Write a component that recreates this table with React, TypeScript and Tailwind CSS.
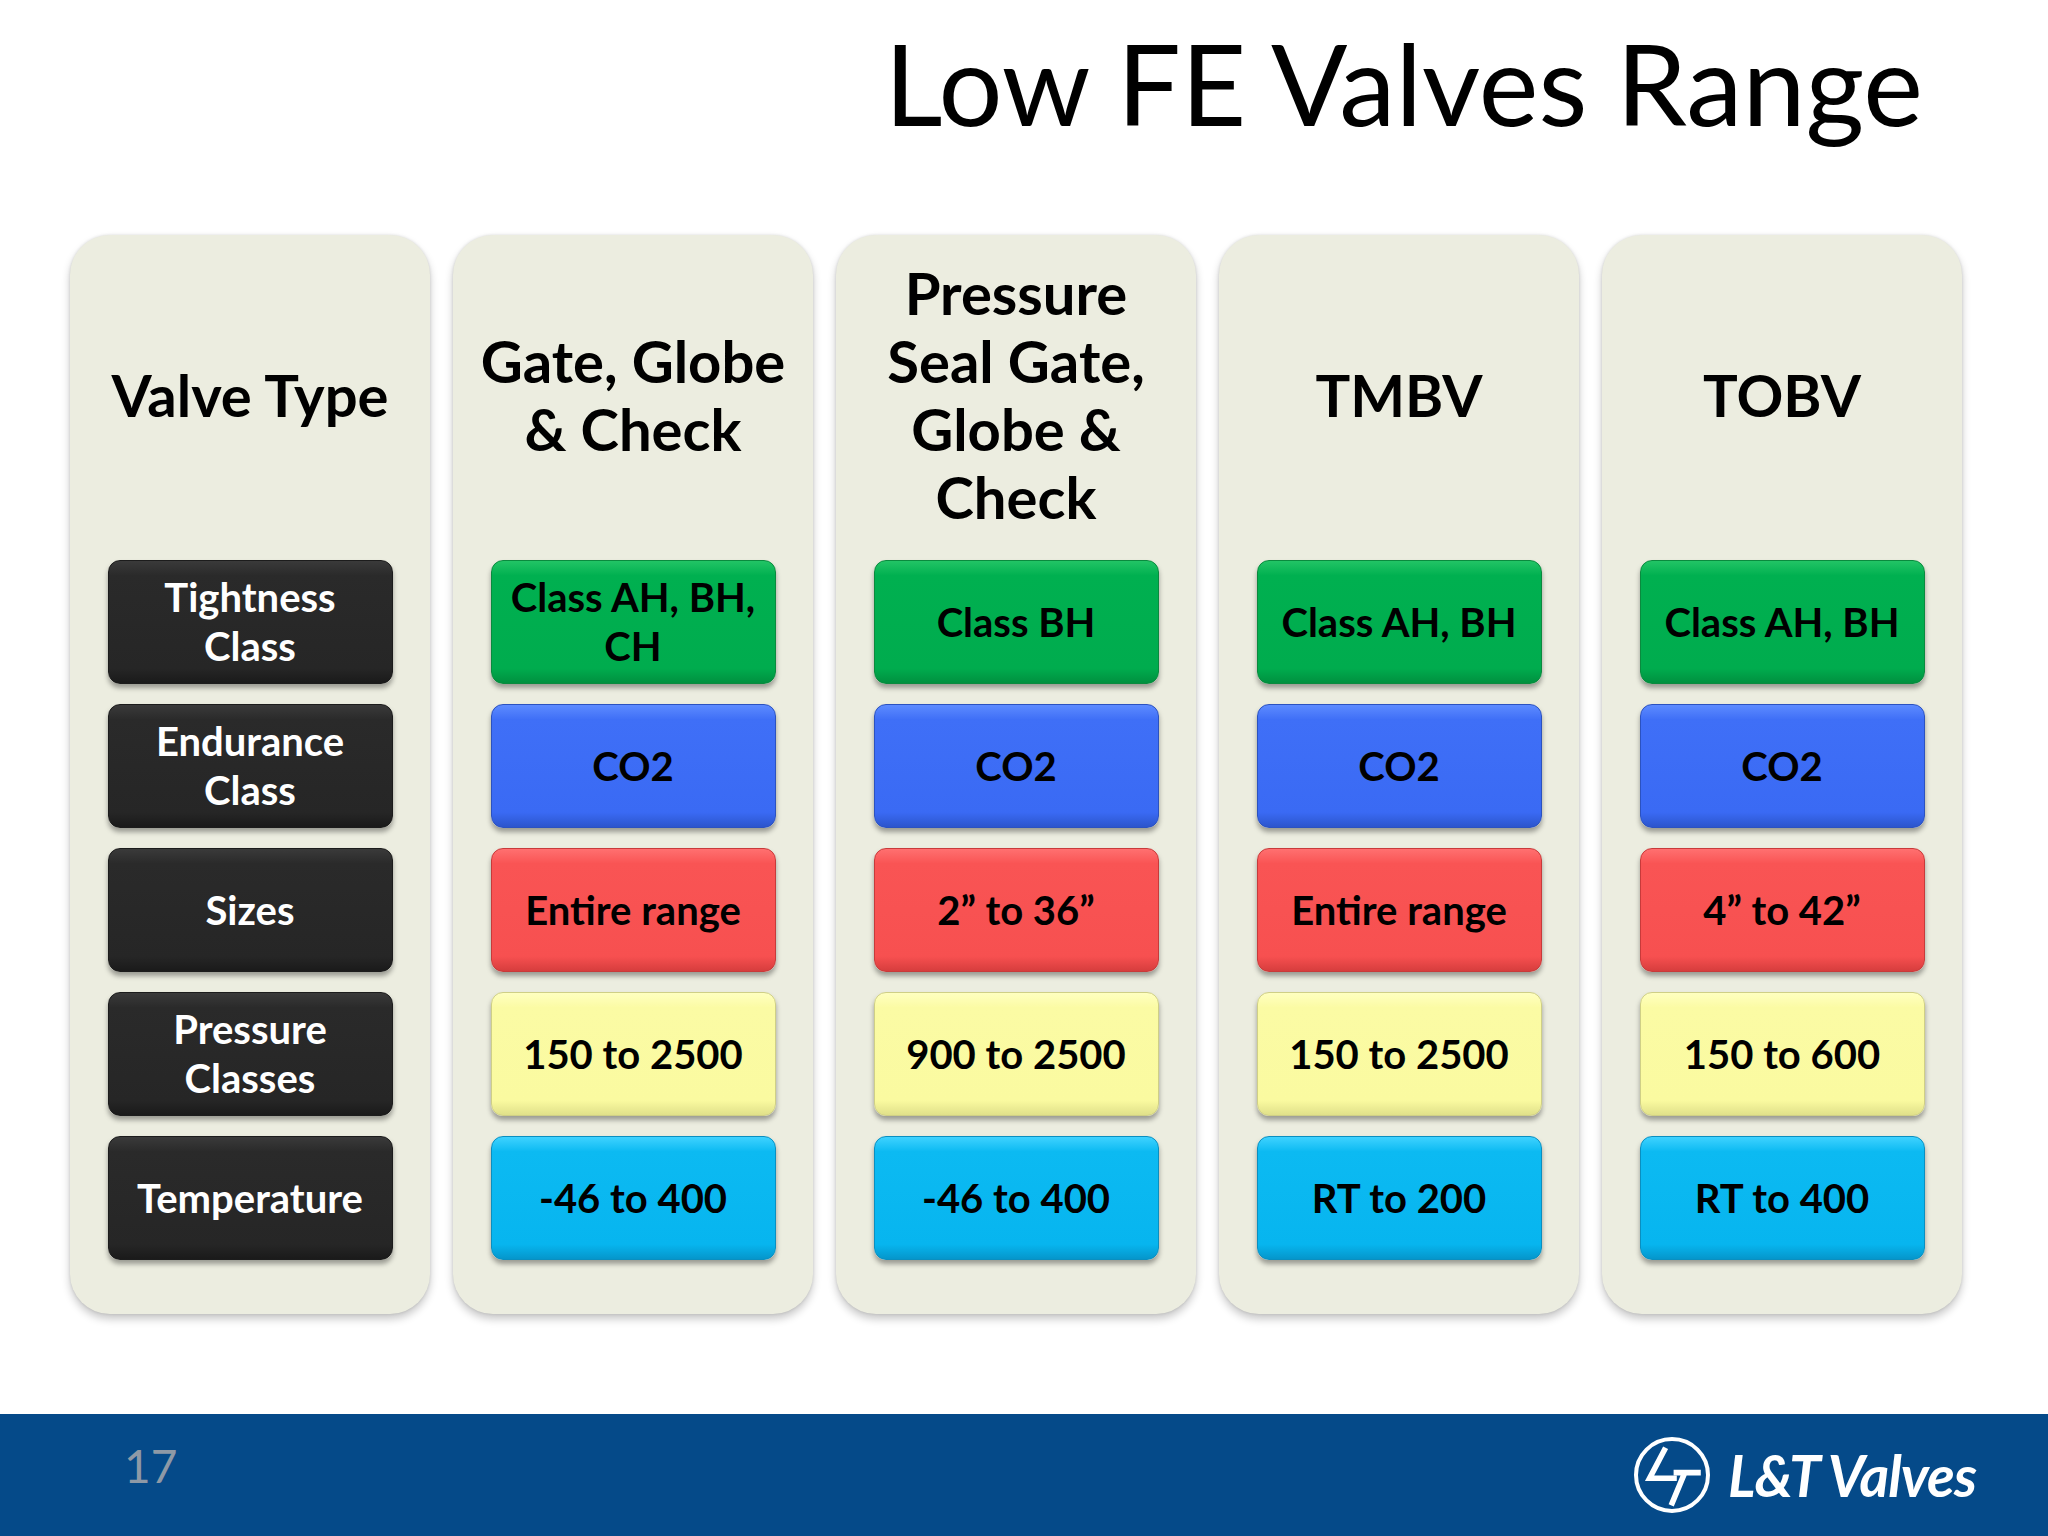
import React from 'react';

// ================================
// Data
// ================================

type Tone = 'dark' | 'green' | 'blue' | 'red' | 'yellow' | 'cyan';

interface Column {
  title: string[];
  cells: string[][];
}

const tones: Tone[] = ['green', 'blue', 'red', 'yellow', 'cyan'];

const toneClass: Record<Tone, string> = {
  dark: 'bg-[linear-gradient(#3a3a3a,#2a2a2a_12%,#262626_88%,#1a1a1a)] text-white border-[#1c1c1c]',
  green: 'bg-[linear-gradient(#22c466,#00b050_12%,#00ac4e_88%,#00903f)] text-black border-[#0a8a3e]',
  blue: 'bg-[linear-gradient(#5d8bff,#3f6ff7_12%,#3a6af4_88%,#2c55cc)] text-black border-[#2b52c0]',
  red: 'bg-[linear-gradient(#ff7070,#f95454_12%,#f75050_88%,#d63d3d)] text-black border-[#c83a3a]',
  yellow: 'bg-[linear-gradient(#ffffc0,#fbfba4_12%,#fafaa0_88%,#e0e08a)] text-black border-[#cfcf86]',
  cyan: 'bg-[linear-gradient(#3fd2ff,#0cbaf2_12%,#07b5ef_88%,#0596cb)] text-black border-[#0a8fc0]',
};

const labels: string[][] = [
  ['Tightness', 'Class'],
  ['Endurance', 'Class'],
  ['Sizes'],
  ['Pressure', 'Classes'],
  ['Temperature'],
];

const columns: Column[] = [
  {
    title: ['Gate, Globe', '& Check'],
    cells: [['Class AH, BH,', 'CH'], ['CO2'], ['Entire range'], ['150 to 2500'], ['-46 to 400']],
  },
  {
    title: ['Pressure', 'Seal Gate,', 'Globe &', 'Check'],
    cells: [['Class BH'], ['CO2'], ['2” to 36”'], ['900 to 2500'], ['-46 to 400']],
  },
  {
    title: ['TMBV'],
    cells: [['Class AH, BH'], ['CO2'], ['Entire range'], ['150 to 2500'], ['RT to 200']],
  },
  {
    title: ['TOBV'],
    cells: [['Class AH, BH'], ['CO2'], ['4” to 42”'], ['150 to 600'], ['RT to 400']],
  },
];

// ================================
// Pieces
// ================================

function Cell({ lines, tone }: { lines: string[]; tone: Tone }) {
  return (
    <div
      className={`flex h-[124px] w-[285px] flex-col items-center justify-center rounded-[12px] border text-center text-[40px] font-bold leading-[49px] shadow-[0_4px_5px_rgba(0,0,0,0.35)] ${toneClass[tone]}`}
    >
      {lines.map((l) => (
        <span key={l} className="whitespace-nowrap">
          {l}
        </span>
      ))}
    </div>
  );
}

function Panel({ title, cells, dark }: { title: string[]; cells: string[][]; dark?: boolean }) {
  return (
    <div className="flex h-[1079px] w-[360px] flex-col items-center rounded-[40px] bg-[#ecede0] px-[37px] pb-[54px] shadow-[0_5px_8px_rgba(0,0,0,0.22),0_0_3px_rgba(0,0,0,0.12)]">
      <div className="flex flex-1 flex-col items-center justify-center pb-[6px] text-center text-[58px] font-bold leading-[68px] text-black">
        {title.map((t) => (
          <span key={t} className="whitespace-nowrap">
            {t}
          </span>
        ))}
      </div>
      <div className="flex flex-col gap-[20px]">
        {cells.map((c, i) => (
          <Cell key={i} lines={c} tone={dark ? 'dark' : tones[i]} />
        ))}
      </div>
    </div>
  );
}

function LtLogo() {
  return (
    <svg width="80" height="80" viewBox="0 0 100 100" fill="none" stroke="white">
      <circle cx="50" cy="50" r="45" strokeWidth="5" />
      <path d="M42 16 L22 54 L56 54" strokeWidth="7" strokeLinejoin="miter" />
      <path d="M52 47 L86 47 M66 47 L49 88" strokeWidth="7" />
    </svg>
  );
}

// ================================
// Page
// ================================

export default function App() {
  return (
    <div className="flex h-[1536px] w-[2048px] flex-col bg-white font-['Lato','Liberation_Sans',sans-serif]">
      <div className="flex h-[235px] justify-end pr-[125px] pt-[26px]">
        <h1 className="text-[113px] font-normal leading-none text-black">Low FE Valves Range</h1>
      </div>

      <div className="flex gap-[23px] pl-[70px]">
        <Panel title={['Valve Type']} cells={labels} dark />
        {columns.map((c) => (
          <Panel key={c.title.join(' ')} title={c.title} cells={c.cells} />
        ))}
      </div>

      <div className="flex-1" />

      <div className="flex h-[122px] items-center justify-between bg-[#054a89] pl-[124px] pr-[72px]">
        <span className="mt-[-18px] text-[46px] leading-none text-[#8e99a6]">17</span>
        <div className="flex items-center gap-[16px]">
          <LtLogo />
          <span className="text-[57px] font-bold italic leading-none tracking-[-1px] text-white">
            L&amp;T Valves
          </span>
        </div>
      </div>
    </div>
  );
}
